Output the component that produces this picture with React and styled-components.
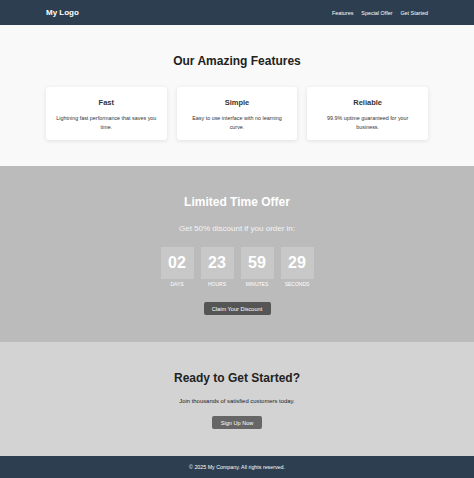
import React from "react";
import styled, { createGlobalStyle } from "styled-components";

const GlobalStyle = createGlobalStyle`
  * { box-sizing: border-box; }
  body {
    margin: 0;
    font-family: "Liberation Sans", Arial, sans-serif;
    color: #333;
  }
`;

const features = [
  { title: "Fast", text: "Lightning fast performance that saves you time." },
  { title: "Simple", text: "Easy to use interface with no learning curve." },
  { title: "Reliable", text: "99.9% uptime guaranteed for your business." },
];

const countdown = [
  { value: "02", label: "Days" },
  { value: "23", label: "Hours" },
  { value: "59", label: "Minutes" },
  { value: "29", label: "Seconds" },
];

const App = () => {
  return (
    <>
      <GlobalStyle />
      <Header>
        <Logo>My Logo</Logo>
        <Nav>
          <NavLink href="#features">Features</NavLink>
          <NavLink href="#offer">Special Offer</NavLink>
          <NavLink href="#start">Get Started</NavLink>
        </Nav>
      </Header>

      <Features id="features">
        <SectionTitle>Our Amazing Features</SectionTitle>
        <CardGrid>
          {features.map((f) => (
            <Card key={f.title}>
              <CardTitle>{f.title}</CardTitle>
              <CardText>{f.text}</CardText>
            </Card>
          ))}
        </CardGrid>
      </Features>

      <Offer id="offer">
        <SectionTitle $light>Limited Time Offer</SectionTitle>
        <OfferText>Get 50% discount if you order in:</OfferText>
        <Countdown>
          {countdown.map((c) => (
            <TimeUnit key={c.label}>
              <TimeBox>{c.value}</TimeBox>
              <TimeLabel>{c.label}</TimeLabel>
            </TimeUnit>
          ))}
        </Countdown>
        <Button $bg="#555" $width="67px" $gap="15px">
          Claim Your Discount
        </Button>
      </Offer>

      <Cta id="start">
        <SectionTitle>Ready to Get Started?</SectionTitle>
        <CtaText>Join thousands of satisfied customers today.</CtaText>
        <Button $bg="#666" $width="50px" $gap="11px">
          Sign Up Now
        </Button>
      </Cta>

      <Footer>© 2025 My Company. All rights reserved.</Footer>
    </>
  );
};

export default App;

const Header = styled.header`
  height: 25px;
  background: #2c3e50;
  display: flex;
  align-items: center;
  justify-content: space-between;
  padding: 0 46px;
`;

const Logo = styled.div`
  color: #fff;
  font-size: 8px;
  font-weight: 700;
`;

const Nav = styled.nav`
  display: flex;
  gap: 8px;
`;

const NavLink = styled.a`
  color: #fff;
  font-size: 5.4px;
  text-decoration: none;
`;

const Section = styled.section`
  display: flex;
  flex-direction: column;
  align-items: center;
  text-align: center;
`;

const Features = styled(Section)`
  background: #f9f9f9;
  height: 141px;
  padding: 28px 46px 0;
`;

const SectionTitle = styled.h2`
  margin: 0;
  font-size: 12px;
  line-height: 16px;
  font-weight: 700;
  color: ${(p) => (p.$light ? "#fff" : "#222")};
`;

const CardGrid = styled.div`
  width: 100%;
  display: grid;
  grid-template-columns: repeat(3, 1fr);
  gap: 10px;
  margin-top: 18px;
`;

const Card = styled.div`
  background: #fff;
  height: 53px;
  border-radius: 3px;
  box-shadow: 0 1px 4px rgba(0, 0, 0, 0.1);
  padding: 11px 9px 0;
`;

const CardTitle = styled.h3`
  margin: 0;
  font-size: 7.5px;
  line-height: 10px;
  font-weight: 700;
  color: #333;
`;

const CardText = styled.p`
  margin: 6px 0 0;
  font-size: 5.4px;
  line-height: 9px;
  color: #333;
`;

const Offer = styled(Section)`
  background: #bbb;
  height: 176px;
  padding-top: 28px;
`;

const OfferText = styled.p`
  margin: 14px 0 0;
  font-size: 8px;
  line-height: 10px;
  color: #f4f4f4;
`;

const Countdown = styled.div`
  display: flex;
  gap: 7px;
  margin-top: 13px;
`;

const TimeUnit = styled.div`
  display: flex;
  flex-direction: column;
  align-items: center;
`;

const TimeBox = styled.div`
  width: 33px;
  height: 32px;
  background: rgba(255, 255, 255, 0.2);
  color: #fff;
  font-size: 16px;
  font-weight: 700;
  display: flex;
  align-items: center;
  justify-content: center;
`;

const TimeLabel = styled.div`
  margin-top: 2px;
  font-size: 5px;
  line-height: 6px;
  color: #fff;
  text-transform: uppercase;
`;

const Button = styled.button`
  width: ${(p) => p.$width};
  height: 13px;
  margin-top: ${(p) => p.$gap};
  padding: 0;
  border: none;
  border-radius: 2px;
  background: ${(p) => p.$bg};
  color: #fff;
  font-family: inherit;
  font-size: 5.6px;
  cursor: pointer;
`;

const Cta = styled(Section)`
  background: #d3d3d3;
  height: 114px;
  padding-top: 28px;
`;

const CtaText = styled.p`
  margin: 11px 0 0;
  font-size: 5.9px;
  line-height: 8px;
  color: #222;
`;

const Footer = styled.footer`
  height: 22px;
  background: #2c3e50;
  color: #fff;
  font-size: 5.3px;
  display: flex;
  align-items: center;
  justify-content: center;
`;
